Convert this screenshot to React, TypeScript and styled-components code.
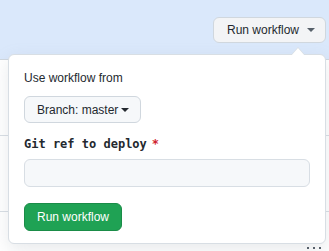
import styled, { createGlobalStyle } from "styled-components";

const GlobalStyle = createGlobalStyle`
    html, body {
        margin: 0;
        padding: 0;
        background: #ffffff;
    }
    body {
        width: 329px;
        height: 251px;
        overflow: hidden;
        font-family: "Liberation Sans", Arial, sans-serif;
        color: #24292f;
    }
`;

const Page = styled.div`
    position: relative;
    width: 329px;
    height: 251px;
    overflow: hidden;
`;

const Header = styled.div`
    height: 60px;
    background: #dae8fb;
    border-bottom: 1px solid #d0d7de;
    display: flex;
    justify-content: flex-end;
    align-items: flex-start;
    padding: 17px 3px 0 0;
    box-sizing: border-box;
`;

const Row = styled.div`
    height: 75px;
    border-bottom: 1px solid #d8dee4;
`;

const Caret = styled.span<{ $color: string; $size: number }>`
    display: inline-block;
    width: 0;
    height: 0;
    border-left: ${(p) => p.$size}px solid transparent;
    border-right: ${(p) => p.$size}px solid transparent;
    border-top: ${(p) => p.$size}px solid ${(p) => p.$color};
`;

const Button = styled.button`
    display: flex;
    align-items: center;
    box-sizing: border-box;
    font-family: "Liberation Sans", Arial, sans-serif;
    font-size: 12px;
    border-radius: 6px;
    cursor: pointer;
`;

const HeaderButton = styled(Button)`
    width: 113px;
    height: 26px;
    padding: 0 0 0 13px;
    gap: 8px;
    background: #f3f4f6;
    border: 1px solid #d0d7de;
    color: #24292f;
`;

const BranchButton = styled(Button)`
    width: 117px;
    height: 27px;
    margin-top: 10px;
    padding: 0 0 0 12px;
    gap: 3px;
    background: #f6f8fa;
    border: 1px solid #d0d7de;
    color: #24292f;
`;

const RunButton = styled(Button)`
    width: 98px;
    height: 28px;
    margin-top: 16px;
    justify-content: center;
    background: #1fa254;
    border: 1px solid #1a8c48;
    color: #ffffff;
`;

const Menu = styled.div`
    position: absolute;
    top: 54px;
    left: 8px;
    width: 318px;
    height: 190px;
    box-sizing: border-box;
    background: #ffffff;
    border: 1px solid #d8dee4;
    border-radius: 6px;
    box-shadow: 0 6px 18px rgba(140, 149, 159, 0.2);
    padding: 15px 15px 0 15px;
    display: flex;
    flex-direction: column;
    align-items: flex-start;

    &::before,
    &::after {
        content: "";
        position: absolute;
        right: 20px;
        width: 0;
        height: 0;
        border-left: 7px solid transparent;
        border-right: 7px solid transparent;
    }
    &::before {
        top: -8px;
        border-bottom: 8px solid #d8dee4;
    }
    &::after {
        top: -7px;
        border-bottom: 8px solid #ffffff;
    }
`;

const Label = styled.div`
    font-size: 12px;
    line-height: 16px;
`;

const FieldLabel = styled.div`
    margin-top: 13px;
    font-family: "DejaVu Sans Mono", "Liberation Mono", monospace;
    font-weight: bold;
    font-size: 12px;
    line-height: 16px;
    color: #24292f;
`;

const Required = styled.span`
    color: #cf222e;
    margin-left: 5px;
`;

const Input = styled.input`
    margin-top: 7px;
    width: 286px;
    height: 28px;
    box-sizing: border-box;
    background: #f6f8fa;
    border: 1px solid #d8dee4;
    border-radius: 6px;
`;

const Dots = styled.div`
    position: absolute;
    right: 8px;
    bottom: 2px;
    display: flex;
    gap: 4px;
`;

const Dot = styled.span`
    width: 2px;
    height: 2px;
    background: #57606a;
`;

function App() {
    return (
        <Page>
            <GlobalStyle />
            <Header>
                <HeaderButton>
                    Run workflow
                    <Caret $color="#57606a" $size={4} />
                </HeaderButton>
            </Header>
            <Row />
            <Row />
            <Menu>
                <Label>Use workflow from</Label>
                <BranchButton>
                    Branch: master
                    <Caret $color="#24292f" $size={4} />
                </BranchButton>
                <FieldLabel>
                    Git ref to deploy<Required>*</Required>
                </FieldLabel>
                <Input type="text" />
                <RunButton>Run workflow</RunButton>
            </Menu>
            <Dots>
                <Dot />
                <Dot />
                <Dot />
            </Dots>
        </Page>
    );
}

export default App;
